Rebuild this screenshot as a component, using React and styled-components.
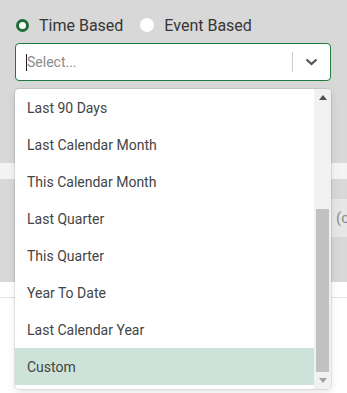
import React from "react";
import styled, { createGlobalStyle } from "styled-components";

const GlobalStyle = createGlobalStyle`
  html, body {
    margin: 0;
    padding: 0;
    background: #ffffff;
    font-family: Roboto, "Liberation Sans", sans-serif;
  }
`;

const Page = styled.div`
  position: relative;
  width: 347px;
  height: 393px;
  overflow: hidden;
  background: #ffffff;
`;

const TopPanel = styled.div`
  height: 163px;
  box-sizing: border-box;
  background: #d8d8d8;
  padding: 13px 16px 0 15px;
`;

const RadioRow = styled.div`
  display: flex;
  align-items: center;
  height: 24px;
  gap: 8px;
`;

const RadioOption = styled.label`
  display: flex;
  align-items: center;
  gap: 10px;
  font-size: 16px;
  color: #363636;
  margin-right: 8px;
`;

const RadioDot = styled.span`
  width: ${(p) => (p.checked ? "13px" : "14px")};
  height: ${(p) => (p.checked ? "13px" : "14px")};
  box-sizing: border-box;
  border-radius: 50%;
  background: #ffffff;
  border: ${(p) => (p.checked ? "3.5px solid #1b6e36" : "none")};
  margin-left: 1px;
`;

const SelectControl = styled.div`
  margin-top: 6px;
  height: 38px;
  box-sizing: border-box;
  border: 1px solid #1e7a3d;
  border-radius: 4px;
  background: #ffffff;
  display: flex;
  align-items: center;
`;

const Placeholder = styled.div`
  flex: 1;
  padding-left: 10px;
  font-size: 14px;
  color: #8a8a8a;
  display: flex;
  align-items: center;
`;

const Caret = styled.span`
  width: 1px;
  height: 17px;
  background: #222222;
`;

const Separator = styled.span`
  width: 1px;
  height: 20px;
  background: #cccccc;
`;

const Indicator = styled.div`
  width: 37px;
  display: flex;
  justify-content: center;
  align-items: center;
`;

const Strip = styled.div`
  height: 16px;
  background: #f4f4f4;
`;

const GrayPanel = styled.div`
  height: 103px;
  box-sizing: border-box;
  background: #d8d8d8;
  padding: 20px 0 0 15px;
`;

const TableRow = styled.div`
  height: 38px;
  background: #e6e6e6;
  display: flex;
  align-items: center;
  padding-left: 321px;
  font-size: 15px;
  color: #8a8a8a;
  white-space: nowrap;
`;

const WhiteArea = styled.div`
  padding-top: 15px;
`;

const Rule = styled.div`
  height: 1px;
  background: #e2e2e2;
`;

const Menu = styled.div`
  position: absolute;
  top: 89px;
  left: 15px;
  width: 316px;
  height: 300px;
  box-sizing: border-box;
  background: #ffffff;
  border-radius: 4px;
  box-shadow: 0 0 0 1px rgba(0, 0, 0, 0.08), 0 3px 8px rgba(0, 0, 0, 0.1);
  display: flex;
  overflow: hidden;
`;

const OptionList = styled.div`
  flex: 1;
  padding-bottom: 4px;
`;

const Option = styled.div`
  height: 37px;
  display: flex;
  align-items: center;
  padding-left: 12px;
  font-size: 14px;
  color: #444444;
  background: ${(p) => (p.selected ? "#cde2d8" : "transparent")};
`;

const ScrollTrack = styled.div`
  width: 17px;
  background: #f1f1f1;
  display: flex;
  flex-direction: column;
  align-items: center;
`;

const ScrollArrow = styled.div`
  height: 17px;
  width: 17px;
  display: flex;
  align-items: center;
  justify-content: center;
`;

const ScrollBody = styled.div`
  flex: 1;
  width: 100%;
  display: flex;
  flex-direction: column;
  align-items: center;
  padding-top: 103px;
`;

const Thumb = styled.div`
  width: 13px;
  flex: 1;
  background: #c1c1c1;
`;

const options = [
  "Last 90 Days",
  "Last Calendar Month",
  "This Calendar Month",
  "Last Quarter",
  "This Quarter",
  "Year To Date",
  "Last Calendar Year",
  "Custom",
];

export default function App() {
  return (
    <>
      <GlobalStyle />
      <Page>
        <TopPanel>
          <RadioRow>
            <RadioOption>
              <RadioDot checked />
              Time Based
            </RadioOption>
            <RadioOption>
              <RadioDot />
              Event Based
            </RadioOption>
          </RadioRow>
          <SelectControl>
            <Placeholder>
              <Caret />
              Select...
            </Placeholder>
            <Separator />
            <Indicator>
              <svg width="13" height="8" viewBox="0 0 13 8">
                <path d="M1.5 1.5 L6.5 6 L11.5 1.5" fill="none" stroke="#555" strokeWidth="2.2" />
              </svg>
            </Indicator>
          </SelectControl>
        </TopPanel>
        <Strip />
        <GrayPanel>
          <TableRow>(c</TableRow>
        </GrayPanel>
        <WhiteArea>
          <Rule />
        </WhiteArea>

        <Menu>
          <OptionList>
            {options.map((o) => (
              <Option key={o} selected={o === "Custom"}>
                {o}
              </Option>
            ))}
          </OptionList>
          <ScrollTrack>
            <ScrollArrow>
              <svg width="8" height="5" viewBox="0 0 8 5">
                <path d="M0 5 L4 0 L8 5 Z" fill="#505050" />
              </svg>
            </ScrollArrow>
            <ScrollBody>
              <Thumb />
            </ScrollBody>
            <ScrollArrow>
              <svg width="8" height="5" viewBox="0 0 8 5">
                <path d="M0 0 L8 0 L4 5 Z" fill="#a3a3a3" />
              </svg>
            </ScrollArrow>
          </ScrollTrack>
        </Menu>
      </Page>
    </>
  );
}
